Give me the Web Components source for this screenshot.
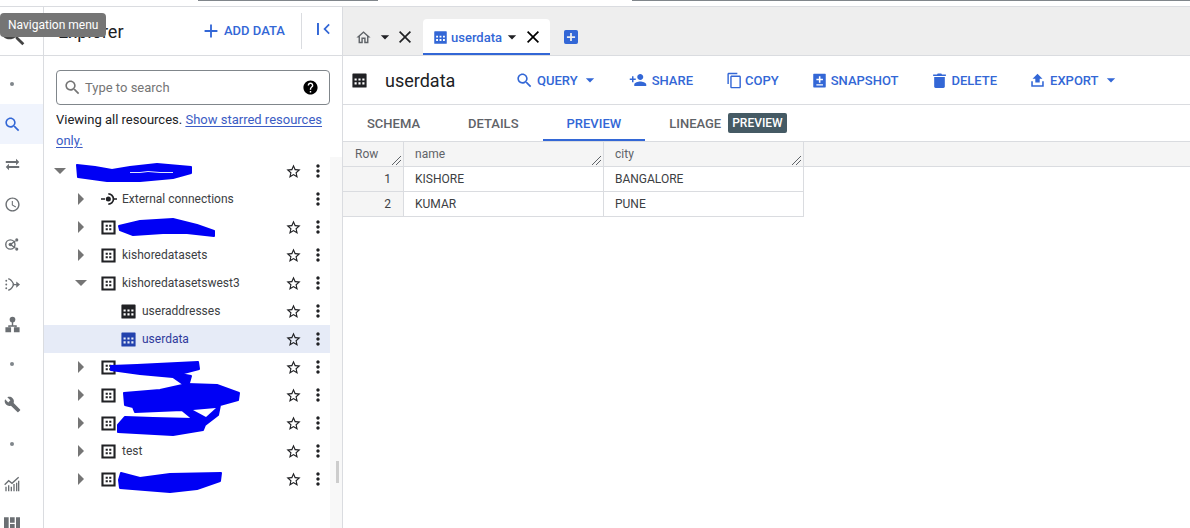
<!DOCTYPE html>
<html lang="en">
<head>
<meta charset="UTF-8">
<title>BigQuery</title>
<style>
  html, body { margin: 0; height: 528px; overflow: hidden; background: #fff; }
  body { font-family: Roboto, "Liberation Sans", sans-serif; }
</style>
</head>
<body>
<x-app></x-app>

<script>
  const ICONS = {
    search: '<path d="M15.5 14h-.79l-.28-.27C15.41 12.59 16 11.11 16 9.5 16 5.91 13.09 3 9.5 3S3 5.91 3 9.5 5.91 16 9.5 16c1.61 0 3.09-.59 4.23-1.57l.27.28v.79l5 4.99L20.49 19l-4.99-5zm-6 0C7.01 14 5 11.99 5 9.5S7.01 5 9.5 5 14 7.01 14 9.5 11.99 14 9.5 14z"/>',
    add: '<path d="M19 13h-6v6h-2v-6H5v-2h6V5h2v6h6v2z"/>',
    swap: '<path d="M7 11L2.500 15.500 7 20v-3.200h14.500v-2.600H7V11zM21.500 8.500L17 4v3.200H2.500v2.600H17V13l4.500-4.500z"/>',
    clock: '<path d="M11.99 2C6.47 2 2 6.48 2 12s4.47 10 9.99 10C17.52 22 22 17.52 22 12S17.52 2 11.99 2zM12 20c-4.42 0-8-3.58-8-8s3.58-8 8-8 8 3.58 8 8-3.58 8-8 8zm.5-13H11v6l5.25 3.15.75-1.23-4.5-2.67z"/>',
    star: '<path d="M22 9.24l-7.19-.62L12 2 9.19 8.63 2 9.24l5.46 4.73L5.82 21 12 17.27 18.18 21l-1.63-7.03L22 9.24zM12 15.4l-3.76 2.27 1-4.28-3.32-2.88 4.38-.38L12 6.1l1.71 4.04 4.38.38-3.32 2.88 1 4.28L12 15.4z"/>',
    more: '<path d="M12 8c1.1 0 2-.9 2-2s-.9-2-2-2-2 .9-2 2 .9 2 2 2zm0 2c-1.1 0-2 .9-2 2s.9 2 2 2 2-.9 2-2-.9-2-2-2zm0 6c-1.1 0-2 .9-2 2s.9 2 2 2 2-.9 2-2-.9-2-2-2z"/>',
    close: '<path d="M20 5.600L18.400 4 12 10.400 5.600 4 4 5.600 10.400 12 4 18.400 5.600 20 12 13.600 18.400 20 20 18.400 13.600 12z"/>',
    help: '<path d="M12 2C6.48 2 2 6.48 2 12s4.48 10 10 10 10-4.48 10-10S17.52 2 12 2zm1 17h-2v-2h2v2zm2.07-7.75l-.9.92C13.45 12.9 13 13.5 13 15h-2v-.5c0-1.1.45-2.1 1.17-2.83l1.24-1.26c.37-.36.59-.86.59-1.41 0-1.1-.9-2-2-2s-2 .9-2 2H8c0-2.21 1.79-4 4-4s4 1.79 4 4c0 .88-.36 1.68-.93 2.25z"/>',
    share: '<path d="M15 12c2.21 0 4-1.79 4-4s-1.79-4-4-4-4 1.79-4 4 1.79 4 4 4zm-9-2V7H4v3H1v2h3v3h2v-3h3v-2H6zm9 4c-2.67 0-8 1.34-8 4v2h16v-2c0-2.66-5.33-4-8-4z"/>',
    copy: '<path d="M16 1H4c-1.1 0-2 .9-2 2v14h2V3h12V1zm3 4H8c-1.1 0-2 .9-2 2v14c0 1.1.9 2 2 2h11c1.1 0 2-.9 2-2V7c0-1.1-.9-2-2-2zm0 16H8V7h11v14z"/>',
    trash: '<path d="M4.500 7h15v13.500c0 1-.8 2-2 2h-11c-1.200 0-2-1-2-2zM21 3.500h-5.500l-1-1.500h-5l-1 1.500H3v2h18z"/>',
    home: '<path d="M12 5.69l5 4.5V18h-2v-6H9v6H7v-7.81l5-4.5M12 3L2 12h3v8h6v-6h2v6h6v-8h3L12 3z"/>',
    wrench: '<path d="M22.7 19l-9.1-9.1c.9-2.3.4-5-1.5-6.9-2-2-5-2.4-7.4-1.3L9 6 6 9 1.6 4.7C.4 7.1.9 10.1 2.9 12.1c1.9 1.9 4.6 2.4 6.9 1.5l9.1 9.1c.4.4 1 .4 1.4 0l2.3-2.3c.5-.4.5-1.1.1-1.4z"/>',
    caret: '<path d="M7 10l5 5 5-5z"/>',
    right: '<path d="M9 6l6 6-6 6z"/>',
    down: '<path d="M6 9l6 6 6-6z"/>',
    collapse: '<path fill-rule="evenodd" d="M4 4h2.600v16H4zM19.400 5L21 6.800 15.800 12l5.200 5.200-1.600 1.800L12.500 12z"/>',
    table: '<path fill-rule="evenodd" d="M3 2h18a1 1 0 0 1 1 1v18a1 1 0 0 1-1 1H3a1 1 0 0 1-1-1V3a1 1 0 0 1 1-1zM5 9v3h3V9zm5.500 0v3h3V9zM16 9v3h3V9zM5 14.500v3h3v-3zm5.500 0v3h3v-3zm5.500 0v3h3v-3z"/>',
    dataset: '<path fill-rule="evenodd" d="M2 2h20v20H2zM5 5v14h14V5zM8 8h3v3H8zM13 8h3v3h-3zM8 13h3v3H8zM13 13h3v3h-3z"/>',
    snapshot: '<path fill-rule="evenodd" d="M3 1h18a1 1 0 0 1 1 1v20a1 1 0 0 1-1 1H3a1 1 0 0 1-1-1V2a1 1 0 0 1 1-1zM11 5v4H7v2.500h4v4h2.500v-4h4V9h-4V5zM7 18v2h10.500v-2z"/>',
    exportup: '<path d="M8.500 15h7V9h4.500L12 1 4 9h4.500zM2 13v9h20v-9h-2.500v6.500h-15V13z"/>',
    plusbox: '<path fill-rule="evenodd" d="M3 0h18a3 3 0 0 1 3 3v18a3 3 0 0 1-3 3H3a3 3 0 0 1-3-3V3a3 3 0 0 1 3-3zM10.500 5v5.500H5v3h5.500V19h3v-5.500H19v-3h-5.500V5z"/>',
    external: '<path d="M0 10.800h6v2.400H0zM18.500 10.800H24v2.400h-5.500z"/><circle cx="11" cy="12" r="3.800"/><path d="M11 4.300a7.700 7.700 0 0 1 0 15.400" fill="none" stroke="currentColor" stroke-width="2.600"/>',
    analytics: '<circle cx="9" cy="12" r="6.500" fill="none" stroke="currentColor" stroke-width="2"/><circle cx="9" cy="12" r="2.500"/><path d="M9 12l7-5M9 12l7 5" stroke="currentColor" stroke-width="2"/><circle cx="18" cy="5.500" r="2.200"/><circle cx="18" cy="18.500" r="2.200"/>',
    dataflow: '<circle cx="2" cy="6" r="1.500"/><circle cx="2" cy="12" r="1.500"/><circle cx="2" cy="18" r="1.500"/><path d="M5 3c5 0 7 5 9 9-2 4-4 9-9 9M12 12h7" fill="none" stroke="currentColor" stroke-width="2"/><path d="M18 7l6 5-6 5z"/>',
    hub: '<circle cx="12" cy="5" r="4"/><path d="M11 8h2v5h5v3h-2v-1H8v1H6v-3h5z"/><path d="M2 16h8v7H2zM14 16h8v7h-8z"/>',
    chart: '<path d="M2 23v-7h2v7zM6 23V14h2v9zM10 23v-7h2v7zM14 23V12h2v11zM18 23V10h2v13zM21 23V7h2v16z"/><path d="M1 13l6-6 5 4 10-9" fill="none" stroke="currentColor" stroke-width="2"/>',
    board: '<path d="M0 2h7v20H0zM9 2h7v8H9zM9 12h7v12H9zM18 2h6v20h-6z"/>'
  };

  function define(name, css, html) {
    customElements.define(name, class extends HTMLElement {
      connectedCallback() {
        if (this.shadowRoot) return;
        const shadow = this.attachShadow({ mode: "open" });
        const body = typeof html === "function" ? html(this) : html;
        shadow.innerHTML = `<style>${css}</style>${body}`;
      }
    });
  }

  define("x-icon", `
    :host { display: inline-flex; flex: none; line-height: 0; }
    svg { display: block; fill: currentColor; }
  `, el => {
    const s = el.getAttribute("size") || 16;
    return `<svg width="${s}" height="${s}" viewBox="0 0 24 24">${ICONS[el.getAttribute("name")] || ""}</svg>`;
  });

  define("x-top-strip", `
    :host { display: flex; height: 6px; border-bottom: 1px solid #dadce0; }
    i { display: block; height: 1px; background: #80868b; }
    .a { width: 180px; margin-left: 198px; }
    .b { flex: 1; margin-left: 254px; }
  `, `<i class="a"></i><i class="b"></i>`);

  define("x-rail", `
    :host { display: block; width: 43px; flex: none; border-right: 1px solid #dadce0; overflow: hidden; color: #6b6f73; }
    .head { height: 48px; border-bottom: 1px solid #dadce0; color: #444; overflow: hidden; margin-bottom: 8px; }
    .head x-icon { margin: 11px 0 0 -3px; }
    .item { height: 40px; width: 43px; display: flex; align-items: center; }
    .item > * { margin-left: 4px; }
    .on { background: #f0f4fd; color: #3367d6; }
    .dot { width: 4px; height: 4px; border-radius: 50%; background: #80868b; margin-left: 10px !important; }
  `, `
    <div class="head"><x-icon name="search" size="32"></x-icon></div>
    <div class="item"><span class="dot"></span></div>
    <div class="item on"><x-icon name="search" size="19" style="margin-left:3px"></x-icon></div>
    <div class="item"><x-icon name="swap" size="17"></x-icon></div>
    <div class="item"><x-icon name="clock" size="17"></x-icon></div>
    <div class="item"><x-icon name="analytics" size="17"></x-icon></div>
    <div class="item"><x-icon name="dataflow" size="15" style="margin-left:5px"></x-icon></div>
    <div class="item"><x-icon name="hub" size="17"></x-icon></div>
    <div class="item"><span class="dot"></span></div>
    <div class="item"><x-icon name="wrench" size="17"></x-icon></div>
    <div class="item"><span class="dot"></span></div>
    <div class="item"><x-icon name="chart" size="16"></x-icon></div>
    <div class="item"><x-icon name="board" size="16"></x-icon></div>
  `);

  define("x-tree-row", `
    :host { display: flex; align-items: center; height: 28px; width: 286px; font-size: 12px; color: #3c4043; box-sizing: border-box; }
    :host([selected]) { background: #e6ebf7; color: #2f3a9c; }
    .arrow { width: 24px; display: flex; justify-content: center; color: #757575; flex: none; }
    .main { margin-left: 7px; margin-right: 5px; color: #202124; display: flex; }
    :host([selected]) .main { color: #2342ad; }
    .label { flex: 1; white-space: nowrap; }
    .act { width: 24px; display: flex; justify-content: center; color: #202124; flex: none; }
    .act + .act { margin-left: 1px; }
    .spacer { width: 24px; flex: none; }
    :host([level="0"]) { padding-left: 4px; }
    :host([level="1"]) { padding-left: 25px; }
    :host([level="2"]) { padding-left: 76px; }
    :host([level="2"]) .main { margin-left: 0; }
  `, el => {
    const arrow = el.getAttribute("arrow");
    const icon = el.getAttribute("icon");
    const noStar = el.hasAttribute("nostar");
    const size = icon === "external" ? 16 : 17;
    return `
      ${arrow ? `<span class="arrow"><x-icon name="${arrow}" size="24"></x-icon></span>` : ""}
      ${icon ? `<span class="main" style="${icon === "external" ? "margin-left:8px" : ""}"><x-icon name="${icon}" size="${size}"></x-icon></span>` : ""}
      <span class="label"><slot></slot></span>
      ${noStar ? `<span class="spacer"></span>` : `<span class="act"><x-icon name="star" size="17"></x-icon></span>`}
      <span class="act"><x-icon name="more" size="20"></x-icon></span>
    `;
  });

  define("x-tree", `
    :host { display: block; position: relative; }
    .gutter { position: absolute; left: 286px; top: 0; width: 12px; height: 371px; background: #f8f8f8; }
    .thumb { position: absolute; left: 292px; top: 304px; width: 3px; height: 22px; background: #cdcdcd; }
    svg { position: absolute; left: 0; top: 0; pointer-events: none; }
    polygon { fill: #0000f5; stroke: #0000f5; stroke-width: 2; stroke-linejoin: round; }
  `, `
    <div class="gutter"></div><div class="thumb"></div>
    <slot></slot>
    <svg width="298" height="371" viewBox="44 157 298 371">
      <polygon points="77,165 95,167 112,170 130,167 157,164 191,167 191,173 173,178 140,181 107,181 78,177"/>
      <path d="M130 172.500h10l8-1 12 1h13" stroke="#dfe6ff" stroke-width="1" fill="none"/>
      <polygon points="119,226 140,221 173,219 197,225 214,231 214,236 187,233 163,233 133,235 120,230"/>
      <polygon points="111,366 137,365 198,362 199,369 180,374 191,376 189,383 183,384 173,377 140,374 111,370"/>
      <polygon points="124,393 160,390 187,384 217,385 239,393 238,400 220,405 218,415 205,425 203,430 173,435 118,432 118,425 125,417 153,418 193,419 182,410 135,412 133,407 125,405"/>
      <polygon style="fill:#fff;stroke:none" points="193,410 216,408 206,417"/>
      <polygon points="121,473 140,478 170,474 221,473 220,481 197,489 170,492 120,488 119,480"/>
    </svg>
  `);

  define("x-explorer", `
    :host { display: block; width: 298px; flex: none; border-right: 1px solid #dadce0; overflow: hidden; font-size: 13px; color: #202124; }
    .head { height: 48px; border-bottom: 1px solid #dadce0; display: flex; align-items: center; }
    .title { font-size: 18px; margin-left: 14px; width: 142px; }
    .add { display: flex; align-items: center; color: #3367d6; font-size: 13px; font-weight: 500; gap: 2px; margin-top: -1px; }
    .sep { width: 1px; height: 36px; background: #dadce0; margin-left: 16px; }
    .collapse { color: #3367d6; margin-left: 12px; margin-top: -1px; }
    .search { margin: 14px 12px 0; height: 35px; box-sizing: border-box; border: 1px solid #80868b; border-radius: 4px; display: flex; align-items: center; padding: 0 10px 0 6px; color: #757575; }
    .search span { flex: 1; margin-left: 3px; font-size: 13px; }
    .search .help { color: #000; }
    p { margin: 4px 12px 0; line-height: 21px; height: 42px; }
    a { color: #3b5cc4; text-decoration: underline; text-underline-offset: 2px; }
    x-tree { margin-top: 6px; }
  `, `
    <div class="head">
      <span class="title">Explorer</span>
      <span class="add"><x-icon name="add" size="22"></x-icon>ADD DATA</span>
      <span class="sep"></span>
      <span class="collapse"><x-icon name="collapse" size="18"></x-icon></span>
    </div>
    <div class="search"><x-icon name="search" size="19"></x-icon><span>Type to search</span><x-icon class="help" name="help" size="17"></x-icon></div>
    <p>Viewing all resources. <a>Show starred resources</a> <a>only.</a></p>
    <x-tree>
      <x-tree-row level="0" arrow="down"></x-tree-row>
      <x-tree-row level="1" arrow="right" icon="external" nostar>External connections</x-tree-row>
      <x-tree-row level="1" arrow="right" icon="dataset"></x-tree-row>
      <x-tree-row level="1" arrow="right" icon="dataset">kishoredatasets</x-tree-row>
      <x-tree-row level="1" arrow="down" icon="dataset">kishoredatasetswest3</x-tree-row>
      <x-tree-row level="2" icon="table">useraddresses</x-tree-row>
      <x-tree-row level="2" icon="table" selected>userdata</x-tree-row>
      <x-tree-row level="1" arrow="right" icon="dataset"></x-tree-row>
      <x-tree-row level="1" arrow="right" icon="dataset"></x-tree-row>
      <x-tree-row level="1" arrow="right" icon="dataset"></x-tree-row>
      <x-tree-row level="1" arrow="right" icon="dataset">test</x-tree-row>
      <x-tree-row level="1" arrow="right" icon="dataset"></x-tree-row>
    </x-tree>
  `);

  define("x-tabs", `
    :host { display: flex; align-items: flex-end; height: 48px; background: #eee; border-bottom: 1px solid #dadce0; }
    .home { display: flex; align-items: center; height: 36px; padding-left: 12px; color: #202124; width: 80px; box-sizing: border-box; }
    .home .h { color: #5f6368; margin-right: 3px; }
    .home .c { margin-right: 1px; }
    .tab { display: flex; align-items: center; width: 127px; height: 36px; box-sizing: border-box; background: #fff; border-radius: 4px 4px 0 0; border-bottom: 2px solid #3367d6; padding: 2px 0 0 10px; color: #3367d6; font-size: 13px; font-weight: 500; }
    .tab .t { margin-right: 3px; }
    .tab .c { color: #202124; margin-right: 2px; }
    .tab .x { color: #000; }
    .plus { color: #3367d6; margin: 0 0 11px 14px; }
  `, `
    <div class="home">
      <x-icon class="h" name="home" size="17"></x-icon>
      <x-icon class="c" name="caret" size="20"></x-icon>
      <x-icon name="close" size="18"></x-icon>
    </div>
    <div class="tab">
      <x-icon class="t" name="table" size="15"></x-icon><span>userdata</span>
      <x-icon class="c" name="caret" size="20"></x-icon>
      <x-icon class="x" name="close" size="18"></x-icon>
    </div>
    <x-icon class="plus" name="plusbox" size="14"></x-icon>
  `);

  define("x-action", `
    :host { display: inline-flex; align-items: center; color: #3367d6; font-size: 13px; font-weight: 500; margin-right: 33px; }
    .caret { margin-right: 0; }
  `, el => `
    <x-icon name="${el.getAttribute("icon")}" size="${el.getAttribute("size") || 14}" style="margin-right:${el.getAttribute("gap") || 4}px"></x-icon>
    <span><slot></slot></span>
    ${el.hasAttribute("menu") ? `<x-icon class="caret" name="caret" size="20" style="margin-left:2px"></x-icon>` : ""}
  `);

  define("x-toolbar", `
    :host { display: flex; align-items: center; height: 48px; border-bottom: 1px solid #dadce0; padding-left: 8px; }
    .ic { color: #202124; }
    .name { font-size: 18px; color: #202124; width: 130px; margin-left: 17px; }
  `, `
    <x-icon class="ic" name="table" size="17"></x-icon>
    <span class="name">userdata</span>
    <x-action icon="search" size="19" gap="3" menu style="margin-right:29px">QUERY</x-action>
    <x-action icon="share" size="18" gap="5">SHARE</x-action>
    <x-action icon="copy" size="17" gap="2">COPY</x-action>
    <x-action icon="snapshot" size="15" gap="4">SNAPSHOT</x-action>
    <x-action icon="trash" size="17" gap="3">DELETE</x-action>
    <x-action icon="exportup" size="15" gap="5" menu>EXPORT</x-action>
  `);

  define("x-subtabs", `
    :host { display: flex; height: 36px; border-bottom: 1px solid #dadce0; font-size: 13px; font-weight: 500; color: #5f6368; }
    span.t { padding: 0 24px; display: flex; align-items: center; box-sizing: border-box; }
    .on { color: #3367d6; border-bottom: 2px solid #3367d6; padding-top: 2px !important; }
    b { margin-left: -17px; font-weight: 500; font-size: 12px; background: #455a64; color: #fff; border-radius: 2px; align-self: center; height: 20px; line-height: 20px; padding: 0 4px; }
  `, `
    <span class="t">SCHEMA</span>
    <span class="t">DETAILS</span>
    <span class="t on">PREVIEW</span>
    <span class="t">LINEAGE</span>
    <b>PREVIEW</b>
  `);

  define("x-table", `
    :host { display: block; font-size: 12px; color: #3c4043; }
    .row { display: flex; height: 25px; box-sizing: border-box; border-bottom: 1px solid #dadce0; width: 461px; }
    .head { width: auto; background: #f5f5f5; color: #5f6368; }
    .c { box-sizing: border-box; width: 200px; padding-left: 11px; border-right: 1px solid #dadce0; display: flex; align-items: center; position: relative; }
    .n { width: 61px; padding: 0 12px; background: #f5f5f5; justify-content: flex-end; }
    .head .n { justify-content: flex-start; }
    .grip { position: absolute; right: 2px; bottom: 1px; }
  `, () => {
    const grip = `<svg class="grip" width="9" height="9" viewBox="0 0 9 9"><path d="M0 9L9 0M4 9L9 4" stroke="#5f6368" stroke-width="1" fill="none"/></svg>`;
    return `
      <div class="row head"><div class="c n">Row${grip}</div><div class="c">name${grip}</div><div class="c">city${grip}</div></div>
      <div class="row"><div class="c n">1</div><div class="c">KISHORE</div><div class="c">BANGALORE</div></div>
      <div class="row"><div class="c n">2</div><div class="c">KUMAR</div><div class="c">PUNE</div></div>
    `;
  });

  define("x-tooltip", `
    :host { position: absolute; left: 0; top: 13px; width: 106px; height: 24px; background: #757575; color: #fff; font-size: 12px; border-radius: 4px; display: flex; align-items: center; padding-left: 8px; box-sizing: border-box; white-space: nowrap; }
  `, `<slot></slot>`);

  define("x-app", `
    :host { display: block; position: relative; width: 1190px; height: 528px; overflow: hidden; }
    .main { display: flex; height: 521px; }
    .right { flex: 1; min-width: 0; }
  `, `
    <x-top-strip></x-top-strip>
    <div class="main">
      <x-rail></x-rail>
      <x-explorer></x-explorer>
      <div class="right">
        <x-tabs></x-tabs>
        <x-toolbar></x-toolbar>
        <x-subtabs></x-subtabs>
        <x-table></x-table>
      </div>
    </div>
    <x-tooltip>Navigation menu</x-tooltip>
  `);
</script>
</body>
</html>
